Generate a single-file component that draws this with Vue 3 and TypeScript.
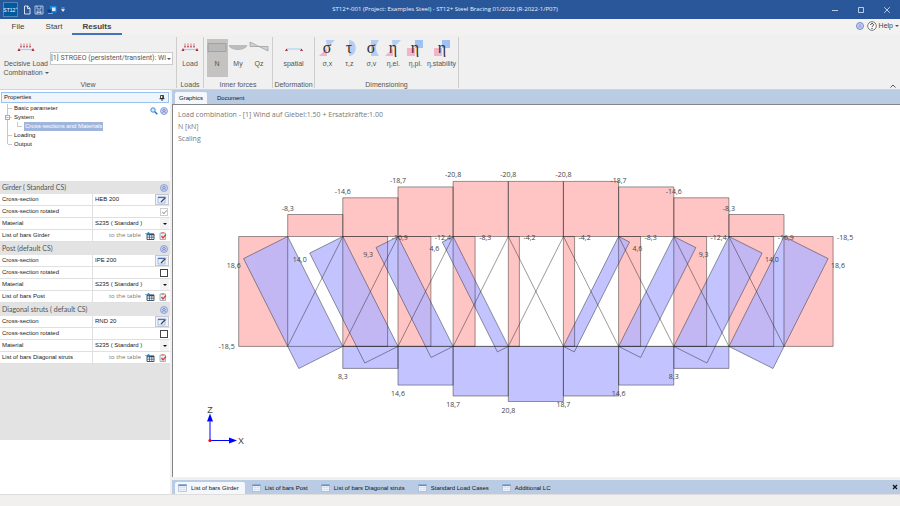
<script setup lang="ts">
import { ref } from 'vue'

type Point = [number, number]
interface Label { x: number; y: number; text: string; anchor: 'start' | 'middle' | 'end' }
interface Section { title: string; profile: string; rotated: boolean; locked: boolean; list: string }

const menus = ['File', 'Start', 'Results']
const activeMenu = ref('Results')
const combination = ref('[1] STRGEO (persistent/transient): Wi')

const checks = [
  { kind: 'sx', glyph: 'σ', label: 'σ,x' },
  { kind: 'tz', glyph: 'τ', label: 'τ,z' },
  { kind: 'sv', glyph: 'σ', label: 'σ,v' },
  { kind: 'sx', glyph: 'η', label: 'η,el.' },
  { kind: 'pl', glyph: 'η', label: 'η,pl.' },
  { kind: 'pl', glyph: 'η', label: 'η,stability' },
]

const sections = ref<Section[]>([
  { title: 'Girder ( Standard CS)', profile: 'HEB 200', rotated: true, locked: true, list: 'List of bars Girder' },
  { title: 'Post (default CS)', profile: 'IPE 200', rotated: false, locked: false, list: 'List of bars Post' },
  { title: 'Diagonal struts ( default CS)', profile: 'RND 20', rotated: false, locked: false, list: 'List of bars Diagonal struts' },
])

const lists = ['List of bars Girder', 'List of bars Post', 'List of bars Diagonal struts', 'Standard Load Cases', 'Additional LC']
const activeList = ref(lists[0])

// Truss geometry and normal forces (kN)
const bay = 55.15
const left = 114.7
const top = 91
const bottom = 200.9
const scale = 2.65
const nodeX = (i: number) => left + i * bay
const format = (v: number) => v.toFixed(1).replace('.', ',')

const topChord = [8.3, 14.6, 18.7, 20.8, 20.8, 20.8, 18.7, 14.6, 8.3]
const bottomChord = [0, 8.3, 14.6, 18.7, 20.8, 18.7, 14.6, 8.3, 0]
const posts = [-18.5, 16.9, 12.4, 8.3, 4.2, 4.2, 8.3, 12.4, 16.9, 18.5]
const diagonals = [18.6, 14.0, 9.3, 4.6]

const rect = (x1: number, y1: number, x2: number, y2: number): Point[] => [[x1, y1], [x2, y1], [x2, y2], [x1, y2]]
const path = (p: Point[]) => p.map((q) => q.map((n) => n.toFixed(1)).join(',')).join(' ')

const compression: Point[][] = []
const tension: Point[][] = []
const labels: Label[] = []

topChord.forEach((f, i) => {
  const y = top - f * scale
  compression.push(rect(nodeX(i), y, nodeX(i + 1), top))
  labels.push({ x: nodeX(i), y: y - 4, text: '-' + format(f), anchor: 'middle' })
})
posts.forEach((f, i) => {
  const edge = nodeX(i) + f * scale
  compression.push(rect(nodeX(i), top, edge, bottom))
  labels.push(f < 0
    ? { x: edge - 4, y: bottom + 3, text: format(f), anchor: 'end' }
    : { x: edge + 4, y: top + 3, text: '-' + format(f), anchor: 'start' })
})
bottomChord.forEach((f, i) => {
  if (!f) return
  const y = bottom + f * scale
  tension.push(rect(nodeX(i), bottom, nodeX(i + 1), y))
  labels.push({ x: nodeX(i), y: y + 11, text: format(f), anchor: 'middle' })
})
const length = Math.hypot(bay, bottom - top)
diagonals.forEach((f, i) => {
  const dx = (f * scale * (bottom - top)) / length
  const dy = (f * scale * bay) / length
  for (const side of [-1, 1]) {
    const a = side < 0 ? nodeX(i) : nodeX(9 - i)
    const b = side < 0 ? nodeX(i + 1) : nodeX(8 - i)
    tension.push([[a, top], [b, bottom], [b + side * dx, bottom + dy], [a + side * dx, top + dy]])
    labels.push({ x: a + side * (dx + 3), y: top + dy + 9, text: format(f), anchor: side < 0 ? 'end' : 'start' })
  }
})
// Diagonals without force: rising ones left of centre, falling ones right of it, both in the middle bay
const rising = [0, 1, 2, 3, 4]
const falling = [4, 5, 6, 7, 8]
</script>

<template>
  <div class="app">
    <header class="titlebar">
      <div class="quick">
        <span class="logo">ST12<sup>+</sup></span>
        <button class="plain" aria-label="New">
          <svg width="8" height="10" viewBox="0 0 8 10"><path d="M1.500 1h3.200L7 3.300V9H1.500zM4.500 1v2.500H7" fill="none" stroke="#fff" stroke-width=".8" /></svg>
        </button>
        <button class="plain" aria-label="Save">
          <svg width="10" height="10" viewBox="0 0 10 10"><path d="M1 1h8v8H1zM3 1v3h4V1M3 9V6h4v3M3 7.500h4" fill="none" stroke="#dce6f5" stroke-width=".7" /></svg>
        </button>
        <button class="plain" aria-label="Windows">
          <svg width="10" height="10" viewBox="0 0 10 10"><rect x="3" y="1" width="6.500" height="6.500" fill="#1689e8" /><rect x="5" y="2.500" width="3.500" height="3.500" fill="#d5ecff" /><rect x=".5" y="4.500" width="4" height="3" fill="#0d3f86" /><path d="M1 8.500h5" stroke="#8ab5ea" stroke-width=".8" /></svg>
        </button>
        <button class="plain" aria-label="Customize">
          <svg width="6" height="6" viewBox="0 0 6 6"><path d="M1.500 1h3M1.500 2.500h3L3 4.500z" fill="#fff" stroke="#fff" stroke-width=".5" /></svg>
        </button>
      </div>
      <h1>ST12+-001 (Project: Examples Steel) - ST12+ Steel Bracing 01/2022 (R-2022-1/P07)</h1>
      <div class="window-controls">
        <button class="plain" aria-label="Minimize"><svg width="8" height="8" viewBox="0 0 8 8"><path d="M1 4.500h6" stroke="#dfe8f5" stroke-width=".8" /></svg></button>
        <button class="plain" aria-label="Maximize"><svg width="8" height="8" viewBox="0 0 8 8"><path d="M1.500 1.500h5v5h-5z" fill="none" stroke="#dfe8f5" stroke-width=".8" /></svg></button>
        <button class="plain" aria-label="Close"><svg width="8" height="8" viewBox="0 0 8 8"><path d="M1.200 1.200l5.600 5.600M6.800 1.200L1.200 6.800" stroke="#dfe8f5" stroke-width=".8" /></svg></button>
      </div>
    </header>

    <nav class="menu">
      <button v-for="m in menus" :key="m" class="menu-tab" :class="{ active: m === activeMenu }" @click="activeMenu = m">{{ m }}</button>
      <div class="help">
        <svg width="8" height="8" viewBox="0 0 8 8"><circle cx="4" cy="4" r="3.500" fill="#c9d3f2" stroke="#7288d2" /><path d="M2.400 4L4 2.500 5.600 4M2.400 5.800L4 4.400l1.600 1.400" fill="none" stroke="#7288d2" stroke-width=".8" /></svg>
        <button class="plain help-button">
          <svg width="10" height="10" viewBox="0 0 10 10"><circle cx="5" cy="5" r="4.300" fill="#fff" stroke="#555" stroke-width=".8" /><path d="M3.600 4c0-2 2.900-2 2.900-.2C6.500 5 5 4.900 5 6.200M5 7v1" fill="none" stroke="#333" /></svg>
          Help<i class="caret"></i>
        </button>
      </div>
    </nav>

    <section class="ribbon">
      <div class="group view">
        <div class="tools">
          <button class="tool decisive">
            <svg width="20" height="15" viewBox="0 0 20 15"><path d="M3 10.500h14" stroke="#a5cdf2" stroke-width="1.200" /><path d="M5 4.500v4M8 4.500v4M11 4.500v4M14 4.500v4" stroke="#c0505a" stroke-width=".7" /><path d="M4 7h2L5 9zM7 7h2L8 9zM10 7h2l-1 2zM13 7h2l-1 2z" fill="#c0505a" /><path d="M1.500 12l1.500-3 1.500 3zM15.500 12l1.500-3 1.500 3z" fill="#b22832" /></svg>
            <span>Decisive Load<br>Combination <i class="caret"></i></span>
          </button>
          <div class="combo">
            <select v-model="combination" aria-label="Load combination">
              <option>[1] STRGEO (persistent/transient): Wi</option>
            </select>
            <i class="caret"></i>
          </div>
        </div>
        <h2>View</h2>
      </div>
      <div class="group loads">
        <div class="tools">
          <button class="tool">
            <svg width="20" height="15" viewBox="0 0 20 15"><path d="M3 10.500h14" stroke="#a5cdf2" stroke-width="1.200" /><path d="M5 4.500v4M8 4.500v4M11 4.500v4M14 4.500v4" stroke="#c0505a" stroke-width=".7" /><path d="M4 7h2L5 9zM7 7h2L8 9zM10 7h2l-1 2zM13 7h2l-1 2z" fill="#c0505a" /><path d="M1.500 12l1.500-3 1.500 3zM15.500 12l1.500-3 1.500 3z" fill="#b22832" /></svg>
            <span>Load</span>
          </button>
        </div>
        <h2>Loads</h2>
      </div>
      <div class="group forces">
        <div class="tools">
          <button class="tool pressed">
            <svg width="20" height="15" viewBox="0 0 20 15"><path d="M1 4.500h18v8H1z" fill="#b9b9b9" stroke="#9a9a9a" stroke-width=".8" /></svg>
            <span>N</span>
          </button>
          <button class="tool">
            <svg width="20" height="15" viewBox="0 0 20 15"><path d="M1 6.500h18C17 12 3 12 1 6.500z" fill="#bdbdbd" stroke="#aaa" stroke-width=".6" /></svg>
            <span>My</span>
          </button>
          <button class="tool">
            <svg width="20" height="15" viewBox="0 0 20 15"><path d="M1 7.500h18v4.500L1 3z" fill="#d2d2d2" stroke="#999" stroke-width=".7" /></svg>
            <span>Qz</span>
          </button>
        </div>
        <h2>Inner forces</h2>
      </div>
      <div class="group deformation">
        <div class="tools">
          <button class="tool">
            <svg width="20" height="15" viewBox="0 0 20 15"><path d="M3 10h14" stroke="#a5cdf2" /><path d="M1 12l1.500-2.500L4 12zM16 12l1.500-2.500L19 12z" fill="#b22832" /></svg>
            <span>spatial</span>
          </button>
        </div>
        <h2>Deformation</h2>
      </div>
      <div class="group dimensioning">
        <div class="tools">
          <button v-for="c in checks" :key="c.label" class="tool">
            <svg width="18" height="18" viewBox="0 0 18 18">
              <template v-if="c.kind === 'sx'"><path d="M8 1h9L9 9z" fill="#b3cdf3" /><path d="M9 9v8H1z" fill="#f3b4ca" /></template>
              <path v-else-if="c.kind === 'tz'" d="M9 1c9 0 9 16 0 16z" fill="#b3cdf3" />
              <path v-else-if="c.kind === 'sv'" d="M9 1h8c-4 5-4 11 0 16H9z" fill="#b3cdf3" />
              <template v-else><path d="M9 1h8v8H9z" fill="#a0c1f1" /><path d="M1 9h8v8H1z" fill="#f3b4ca" /></template>
              <text x="9" y="14" text-anchor="middle">{{ c.glyph }}</text>
            </svg>
            <span>{{ c.label }}</span>
          </button>
        </div>
        <h2>Dimensioning</h2>
      </div>
      <button class="plain collapse" aria-label="Collapse ribbon"><svg width="8" height="6" viewBox="0 0 8 6"><path d="M1.500 4.500L4 2l2.500 2.500" fill="none" stroke="#555" /></svg></button>
    </section>

    <main class="workspace">
      <aside class="side">
        <h2 class="side-title">Properties
          <svg width="6" height="8" viewBox="0 0 6 8"><path d="M1.500 1.500h3v3h-3z" fill="none" stroke="#222" stroke-width=".8" /><path d="M3.800 1.500v3M.5 4.700h5M3 4.700V7" stroke="#222" stroke-width=".9" /></svg>
        </h2>
        <div class="tree-pane">
          <ul class="tree">
            <li>Basic parameter</li>
            <li class="open">System
              <ul><li><span class="selected">Cross-sections and Materials</span></li></ul>
            </li>
            <li>Loading</li>
            <li>Output</li>
          </ul>
          <div class="tree-tools">
            <svg width="8" height="8" viewBox="0 0 8 8"><path d="M4.500 4.500l2.800 2.800" stroke="#2c74c9" stroke-width="1.500" /><circle cx="3" cy="3" r="2.200" fill="#d5efff" stroke="#3b8ad9" /></svg>
            <svg width="8" height="8" viewBox="0 0 8 8"><circle cx="4" cy="4" r="3.500" fill="#c9d3f2" stroke="#8294d4" stroke-width=".8" /><path d="M2.300 3.800L4 2.300l1.700 1.500M2.300 5.800L4 4.300l1.700 1.500" fill="none" stroke="#5c70b8" stroke-width=".8" /></svg>
          </div>
        </div>
        <div class="sections">
          <section v-for="(s, i) in sections" :key="s.title">
            <h3>{{ s.title }}
              <svg width="8" height="8" viewBox="0 0 8 8"><circle cx="4" cy="4" r="3.500" fill="#c9d3f2" stroke="#8294d4" stroke-width=".8" /><path d="M2.300 3.800L4 2.300l1.700 1.500M2.300 5.800L4 4.300l1.700 1.500" fill="none" stroke="#5c70b8" stroke-width=".8" /></svg>
            </h3>
            <div class="row">
              <label :for="'profile' + i">Cross-section</label>
              <div class="value">
                <input :id="'profile' + i" v-model="s.profile" type="text">
                <button class="edit" aria-label="Edit cross-section">
                  <svg width="10" height="8" viewBox="0 0 10 8"><path d="M1 1h7v6H1z" fill="#e9f2ff" stroke="#8fa9cf" stroke-width=".7" /><path d="M1 1.500h7" stroke="#3c73c4" stroke-width="1.200" /><path d="M4 6l4.500-4.500" stroke="#39485f" stroke-width="1.300" /><path d="M8 2l1-1" stroke="#e28b2c" stroke-width="1.400" /></svg>
                </button>
              </div>
            </div>
            <div class="row">
              <label :for="'rotated' + i">Cross-section rotated</label>
              <div class="value end"><input :id="'rotated' + i" v-model="s.rotated" type="checkbox" :disabled="s.locked"></div>
            </div>
            <div class="row">
              <label :for="'material' + i">Material</label>
              <div class="value">
                <select :id="'material' + i"><option>S235 ( Standard )</option></select>
                <span class="drop"><i class="caret"></i></span>
              </div>
            </div>
            <div class="row">
              <span class="name">{{ s.list }}</span>
              <div class="value end links">
                <a href="#">to the table</a>
                <svg width="10" height="8" viewBox="0 0 10 8"><path d="M2 2h7v5.500H2z" fill="#fff" stroke="#34495f" stroke-width=".9" /><path d="M2 2.500h7" stroke="#34495f" stroke-width="1.500" /><path d="M2 5.200h7M4.500 3v4.500M6.800 3v4.500" stroke="#34495f" stroke-width=".7" /><path d="M0 1.500h4M3 0l2 1.500L3 3z" fill="#1d8ad6" stroke="#1d8ad6" stroke-width=".6" /></svg>
                <svg width="8" height="8" viewBox="0 0 8 8"><path d="M1 1h5.500v6.500H1z" fill="#e7edf8" stroke="#8496b8" stroke-width=".7" /><path d="M2.500.8h2.700" stroke="#d68a4c" stroke-width="1.400" /><path d="M2.500 4l1.500 2 3-3.500" fill="none" stroke="#d8452c" stroke-width="1.300" /></svg>
              </div>
            </div>
          </section>
        </div>
      </aside>

      <div class="content">
        <nav class="strip">
          <button class="doc-tab active">Graphics</button>
          <button class="doc-tab">Document</button>
        </nav>
        <div class="canvas">
          <div class="caption">
            <p>Load combination - [1] Wind auf Giebel:1.50 + Ersatzkräfte:1.00</p>
            <p>N [kN]</p>
            <p>Scaling</p>
          </div>
          <svg class="diagram" viewBox="0 0 727 331" role="img" aria-label="Normal forces">
            <g class="compression"><polygon v-for="(p, i) in compression" :key="i" :points="path(p)" /></g>
            <g class="tension"><polygon v-for="(p, i) in tension" :key="i" :points="path(p)" /></g>
            <g class="outline">
              <polygon v-for="(p, i) in compression" :key="'c' + i" :points="path(p)" />
              <polygon v-for="(p, i) in tension" :key="'t' + i" :points="path(p)" />
              <line :x1="nodeX(0)" :y1="bottom" :x2="nodeX(9)" :y2="bottom" />
              <line v-for="i in rising" :key="'r' + i" :x1="nodeX(i)" :y1="bottom" :x2="nodeX(i + 1)" :y2="top" />
              <line v-for="i in falling" :key="'f' + i" :x1="nodeX(i)" :y1="top" :x2="nodeX(i + 1)" :y2="bottom" />
            </g>
            <g class="labels">
              <text v-for="(l, i) in labels" :key="i" :x="l.x" :y="l.y" :text-anchor="l.anchor">{{ l.text }}</text>
            </g>
            <g class="axes">
              <path d="M37 295V276M37 295h20" />
              <path class="head" d="M34 276l3-8 3 8zM56 292l8 3-8 3z" />
              <circle cx="37" cy="295" r="1.600" />
              <text x="37" y="267" text-anchor="middle">Z</text>
              <text x="65" y="298">X</text>
            </g>
          </svg>
        </div>
        <nav class="strip lists">
          <button v-for="l in lists" :key="l" class="list-tab" :class="{ active: l === activeList }" @click="activeList = l">
            <svg width="9" height="8" viewBox="0 0 9 8"><path d="M.5.5h8v7h-8z" fill="#f4f8fd" stroke="#9fb3cf" stroke-width=".7" /><path d="M.5 1.300h8" stroke="#5b90d8" stroke-width="1.500" /><path d="M.5 3.500h8M.5 5.500h8M3 2v5.500M6 2v5.500" stroke="#c9d5e6" stroke-width=".5" /></svg>
            {{ l }}
          </button>
          <button class="plain close" aria-label="Close lists"><svg width="6" height="6" viewBox="0 0 6 6"><path d="M1 1l4 4M5 1L1 5" stroke="#111" stroke-width="1.200" /></svg></button>
        </nav>
      </div>
    </main>
    <footer class="status"></footer>
  </div>
</template>

<style>
body { margin: 0; }
</style>

<style scoped>
.app { display: flex; flex-direction: column; height: 100vh; background: #f0f0f0; color: #222; font-family: "Liberation Sans", Arial, sans-serif; font-size: 7px; line-height: 9px; }
.app * { box-sizing: border-box; }
h1, h2, h3, p, ul { margin: 0; padding: 0; font-size: inherit; font-weight: normal; }
button, select, input { font: inherit; color: inherit; margin: 0; padding: 0; border: 0; background: none; }
svg { display: block; flex: none; }
.plain { display: flex; align-items: center; }
.caret { display: inline-block; flex: none; border: 2px solid transparent; border-top-color: #555; border-bottom: 0; vertical-align: middle; }

.titlebar { display: grid; grid-template-columns: 1fr auto 1fr; align-items: center; height: 19px; flex: none; background: #2a579a; color: #eef3fa; }
.titlebar h1 { font-family: "Open Sans", sans-serif; font-size: 6px; padding-right: 10px; }
.quick { display: flex; align-items: center; gap: 3px; padding-left: 3px; }
.logo { display: flex; justify-content: center; width: 15px; height: 15px; padding-top: 3px; margin-right: 2px; border: 1px solid #4f86bd; background: #005a9e; color: #fff; font-size: 5px; }
.logo sup { font-size: 4px; line-height: 3px; }
.window-controls { display: flex; justify-content: flex-end; gap: 18px; padding-right: 9px; }

.menu { display: flex; height: 16px; flex: none; background: #f3f2f1; font-size: 8px; color: #444; }
.menu-tab { width: 36px; border-bottom: 2px solid transparent; }
.menu-tab.active { width: 50px; font-weight: bold; border-color: #4472b4; }
.help { display: flex; align-items: center; gap: 3px; margin-left: auto; height: 13px; font-size: 7px; }
.help-button { gap: 2px; padding-right: 1px; }

.ribbon { display: flex; height: 55px; flex: none; padding-top: 2px; border-bottom: 1px solid #d5d2cf; color: #555; }
.group { display: flex; flex-direction: column; flex: none; border-right: 1px solid #cfcdcb; margin-bottom: 1px; }
.group h2 { text-align: center; line-height: 7px; }
.tools { display: flex; flex: 1; justify-content: center; align-items: flex-start; padding-top: 2px; }
.tool { display: flex; flex-direction: column; align-items: center; flex: none; min-width: 21px; height: 38px; white-space: nowrap; }
.tool span { margin-top: auto; height: 18px; }
.pressed { background: #c5c3c1; }
.view { width: 177px; }
.view .tools { justify-content: flex-start; gap: 1px; padding-left: 3px; }
.decisive { width: 46px; }
.combo { display: flex; align-items: center; flex: 1; min-width: 0; height: 13px; margin: 13px 3px 0 0; border: 1px solid #c9c9c9; background: #fff; padding-right: 1px; font-family: Roboto, sans-serif; }
.combo select { flex: 1; min-width: 0; appearance: none; }
.loads { width: 27px; }
.forces { width: 69px; }
.deformation { width: 42px; }
.deformation h2 { white-space: nowrap; }
.dimensioning { width: 144px; }
.dimensioning .tools { gap: 1px; }
.dimensioning text { font: 16px "Liberation Serif", serif; fill: #333; }
.collapse { margin: auto 3px 0 auto; }

.workspace { display: flex; flex: 1; min-height: 0; }
.side { width: 170px; flex: none; display: flex; flex-direction: column; background: #fff; font-size: 6px; }
.side-title { display: flex; justify-content: space-between; align-items: center; height: 11px; margin: 2px 1px 0; padding: 0 3px 0 2px; border: 1px solid #9cc3f0; background: #eff5fd; }
.tree-pane { display: flex; justify-content: space-between; height: 78px; padding: 1px 2px 0 7px; }
.tree, .tree ul { list-style: none; }
.tree li { position: relative; padding-left: 6px; border-left: 1px solid #c8c8c8; }
.tree li::before { content: ""; position: absolute; left: 0; top: 4px; width: 4px; border-top: 1px solid #c8c8c8; }
.tree ul { padding-left: 3px; }
.tree li.open::after { content: "−"; position: absolute; left: -3px; top: 2px; width: 5px; height: 5px; border: 1px solid #aaa; background: #fff; line-height: 3px; font-size: 5px; text-align: center; box-sizing: border-box; }
.tree > li:last-child, .tree ul li { border-image: linear-gradient(#c8c8c8 50%, transparent 50%) 1; }
.selected { display: inline-block; padding: 0 1px; background: #9fb5dd; color: #fff; }
.tree-tools { display: flex; gap: 2px; padding-top: 3px; }
.sections { background: #e3e3e3; min-height: 259px; }
h3 { display: flex; justify-content: space-between; align-items: center; height: 13px; padding: 0 2px; background: #e3e3e3; color: #555; font-family: Lato, sans-serif; font-size: 7px; }
.row { display: grid; grid-template-columns: 92px 1fr; height: 12px; border-bottom: 1px solid #e0e0e0; background: #fff; }
.row label, .name { padding-left: 2px; line-height: 11px; white-space: nowrap; }
.value { display: flex; align-items: center; min-width: 0; border-left: 1px solid #e0e0e0; padding: 0 1px 0 2px; }
.value input[type="text"], .value select { flex: 1; min-width: 0; appearance: none; }
.value.end { justify-content: flex-end; }
.edit { display: flex; align-items: center; justify-content: center; width: 14px; height: 11px; border: 1px solid #c4c8d4; background: #eef1f8; }
.value input[type="checkbox"] { appearance: none; width: 8px; height: 8px; margin-right: 1px; border: 1px solid #444; background: #fff; }
.value input[type="checkbox"]:disabled { border-color: #ccc; }
.value input[type="checkbox"]:checked::after { content: ""; display: block; width: 2px; height: 4px; margin-left: 2px; border: solid #aaa; border-width: 0 1px 1px 0; transform: rotate(45deg); }
.drop { display: flex; align-items: center; justify-content: center; width: 9px; align-self: stretch; background: #f3f3f3; }
.drop .caret { border-top-color: #111; }
.value.links { gap: 4px; padding-right: 3px; }
.links a { color: #777; text-decoration: none; font-family: "Open Sans", sans-serif; }

.content { display: flex; flex-direction: column; flex: 1; min-width: 0; margin-left: 2px; }
.strip { display: flex; align-items: flex-end; height: 14px; flex: none; padding-left: 3px; background: #b9cce4; color: #111; font-size: 6px; }
.doc-tab { height: 12px; padding: 0 4px; margin-right: 6px; }
.strip .active { background: #f4f8fd; border-radius: 2px 2px 0 0; }
.canvas { display: flex; flex-direction: column; flex: 1; min-height: 0; border: solid #858585; border-width: 1px 0 0 1px; background: #fff; }
.caption { padding: 4px 5px 0; height: 40px; color: #777; font-family: "Open Sans", sans-serif; line-height: 12px; }
.diagram { flex: 1; width: 100%; min-height: 0; }
.compression { fill: #ffc4c4; }
.tension { fill: #b5b5ff; opacity: .8; }
.outline { fill: none; stroke: #222; stroke-opacity: .65; stroke-width: .7; }
.labels { font: 7px "Open Sans", sans-serif; fill: #444; }
.axes { fill: none; stroke: #00f; stroke-width: 1; }
.axes .head { fill: #00f; stroke: none; }
.axes circle { fill: #f00; stroke: none; }
.axes text { fill: #444; stroke: none; font-size: 9px; }
.lists { margin-top: 3px; }
.list-tab { display: flex; align-items: center; gap: 4px; height: 12px; padding: 0 6px 0 3px; margin-right: 4px; }
.close { margin: auto 2px auto auto; }
.status { height: 12px; flex: none; border-top: 1px solid #dedede; background: #f2f0ee; }
</style>
